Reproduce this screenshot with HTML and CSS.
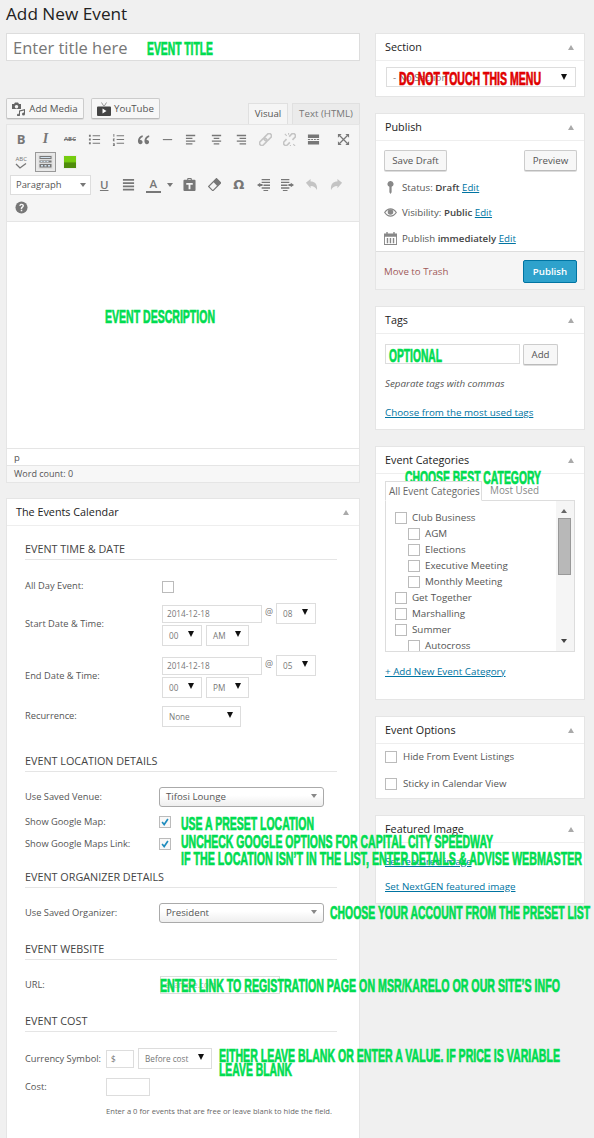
FILE: index.html
```html
<!DOCTYPE html>
<html>
    <head>
        <title>Add New Event</title>
        <link rel="stylesheet" href="styles.css">
    </head>
    <body>
        <div class="page">
            <div class="main">
                <h1>Add New Event</h1>
                <input class="title-input" type="text" placeholder="Enter title here">

                <!--MEDIA BUTTONS AND TABS-->
                <div class="media-row">
                    <div class="btn media-btn">
                        <svg class="media-ic" viewBox="0 0 14 14"><path d="M0 2h2l1-1.500h3l1 1.500h2v5h-9zM4.500 3a1.700 1.700 0 1 0 .01 0z" fill-rule="evenodd"/><path d="M7 13V8.500l6-1.500v5a1.500 1.500 0 1 1-1.500-1.500h.5V8.500l-4 1V13a1.500 1.500 0 1 1-1.500-1.500z"/></svg>
                        Add Media
                    </div>
                    <div class="btn media-btn">
                        <svg class="yt-ic" viewBox="0 0 14 14"><path d="M1 4.500h12a1 1 0 0 1 1 1V13a1 1 0 0 1-1 1H1a1 1 0 0 1-1-1V5.500a1 1 0 0 1 1-1z" fill="#444"/><path d="M5.500 6.500l4 2.500-4 2.500z" fill="#fff"/><path d="M4.500 .5l2.500 4 2.500-4" fill="none" stroke="#999" stroke-width="1"/></svg>
                        YouTube
                    </div>
                    <div class="tabs">
                        <div class="tab tab-on">Visual</div>
                        <div class="tab tab-text">Text (HTML)</div>
                    </div>
                </div>

                <!--EDITOR-->
                <div class="editor">
                    <div class="toolbar">
                        <div class="tb-row">
                            <span class="tb tb-b">B</span>
                            <span class="tb tb-i">I</span>
                            <span class="tb tb-abc">ABC</span>
                            <span class="tb"><svg class="ic" viewBox="0 0 14 14"><path d="M1 2h2v2H1zM1 6h2v2H1zM1 10h2v2H1zM5 2.500h8v1H5zM5 6.500h8v1H5zM5 10.500h8v1H5z"/></svg></span>
                            <span class="tb"><svg class="ic" viewBox="0 0 14 14"><path d="M1.500 1h1v3h-1zM1 6h2v1H2v1h1v1H1zM1 11h2v3H1v-1h1v-.2H1.500v-.6H2V12H1zM5 2.500h8v1H5zM5 6.500h8v1H5zM5 10.500h8v1H5z"/></svg></span>
                            <span class="tb"><svg class="ic" viewBox="0 0 14 14"><path d="M6 2.500C3 3.500 1 5.500 1 8.500 1 10.500 2 12 3.700 12 5 12 6 11 6 9.600 6 8.300 5 7.500 3.900 7.500c-.3 0-.5 0-.7.100C3.400 6 4.500 5 6.300 4.200zM13 2.500c-3 1-5 3-5 6 0 2 1 3.500 2.700 3.500 1.300 0 2.300-1 2.300-2.400 0-1.300-1-2.100-2.100-2.100-.3 0-.5 0-.7.100.2-1.600 1.300-2.600 3.100-3.400z"/></svg></span>
                            <span class="tb"><svg class="ic" viewBox="0 0 14 14"><path d="M2 6.500h10v1.200H2z"/></svg></span>
                            <span class="tb"><svg class="ic" viewBox="0 0 14 14"><path d="M1 2h10v1.500H1zM1 5h7v1.500H1zM1 8h10v1.500H1zM1 11h7v1.500H1z"/></svg></span>
                            <span class="tb"><svg class="ic" viewBox="0 0 14 14"><path d="M2 2h10v1.500H2zM4 5h6v1.500H4zM2 8h10v1.500H2zM4 11h6v1.500H4z"/></svg></span>
                            <span class="tb"><svg class="ic" viewBox="0 0 14 14"><path d="M3 2h10v1.500H3zM6 5h7v1.500H6zM3 8h10v1.500H3zM6 11h7v1.500H6z"/></svg></span>
                            <span class="tb off"><svg class="ic" viewBox="0 0 14 14"><g transform="rotate(-45 7 7)" fill="none" stroke="currentColor" stroke-width="1.800"><rect x="-1" y="4.500" width="9" height="5" rx="2.500"/><rect x="6" y="4.500" width="9" height="5" rx="2.500"/></g></svg></span>
                            <span class="tb off"><svg class="ic" viewBox="0 0 14 14"><g transform="rotate(-45 7 7)" fill="none" stroke="currentColor" stroke-width="1.800"><path d="M5 4.500H1.500a2.500 2.500 0 0 0 0 5H5"/><path d="M9 4.500h3.500a2.500 2.500 0 0 1 0 5H9"/></g><path d="M2 1l2 2M6 0v2M11 12l2 2M8 13v1" stroke="currentColor" stroke-width="1.200"/></svg></span>
                            <span class="tb"><svg class="ic" viewBox="0 0 14 14"><path d="M1 1.500h12v4H1zM1 8.500h12v4H1zM1 6.500h2.500v1H1zM4.500 6.500h2v1h-2zM7.500 6.500h2v1h-2zM10.500 6.500H13v1h-2.500z"/></svg></span>
                            <span class="tb tb-full"><svg class="ic" viewBox="0 0 14 14"><path d="M1 1h4L1 5zM13 1H9l4 4zM1 13h4l-4-4zM13 13H9l4-4z"/><path d="M3 3l8 8M11 3l-8 8" stroke="currentColor" stroke-width="1.300"/></svg></span>
                        </div>
                        <div class="tb-row">
                            <span class="tb tb-spell">ABC<svg viewBox="0 0 12 6"><path d="M1 1l4 4 6-4.500" fill="none" stroke="currentColor" stroke-width="1.300"/></svg></span>
                            <span class="tb tb-on"><svg class="ic-sink" viewBox="0 0 14 14"><path d="M0 0h14v14H0z" fill="#ddd"/><path d="M1 1h12v3H1zM1 5.500h12v2H1zM1 9h12v3.500H1z" fill="#777"/><path d="M2 2h10v1H2zM2 6h2v1H2zM5 6h2v1H5zM8 6h2v1H8zM2.500 10h2v1.500h-2zM6 10h2v1.500H6zM9.500 10h2v1.500h-2z" fill="#cfe0ee"/></svg></span>
                            <span class="tb"><i class="green-sq"></i></span>
                        </div>
                        <div class="tb-row">
                            <div class="para-sel">Paragraph<i class="caret"></i></div>
                            <span class="tb tb-u">U</span>
                            <span class="tb"><svg class="ic" viewBox="0 0 14 14"><path d="M1 1h12v2H1zM1 4.500h12v2H1zM1 8h12v2H1zM1 11.500h12v2H1z"/></svg></span>
                            <span class="tb tb-a"><span class="a-letter">A</span><i class="caret"></i></span>
                            <span class="tb"><svg class="ic" viewBox="0 0 14 14"><path d="M1.500 2h3V1a1 1 0 0 1 1-1h3a1 1 0 0 1 1 1v1h3a1 1 0 0 1 1 1v10a1 1 0 0 1-1 1h-11a1 1 0 0 1-1-1V3a1 1 0 0 1 1-1z"/><path d="M3.500 5.500h7v1.800H8V12H6V7.300H3.500zM5.700 1v1h2.600V1z" fill="#f5f5f5"/></svg></span>
                            <span class="tb"><svg class="ic" viewBox="0 0 14 14"><g transform="rotate(-45 7 7)"><path d="M1 4h12v6.500H1z" fill="none" stroke="currentColor" stroke-width="1.300"/><path d="M8 4h5v6.500H8z"/></g></svg></span>
                            <span class="tb tb-om">Ω</span>
                            <span class="tb"><svg class="ic" viewBox="0 0 14 14"><path d="M5 1h9v1.500H5zM5 4h9v1.500H5zM7 7h7v1.500H7zM5 10h9v1.500H5zM7 13h5v1H7zM0 7.500l3.500-2.500V6.500h2.500v2H3.500V10z"/></svg></span>
                            <span class="tb"><svg class="ic" viewBox="0 0 14 14"><path d="M0 1h9v1.500H0zM0 4h9v1.500H0zM0 7h7v1.500H0zM0 10h9v1.500H0zM2 13h5v1H2zM14 7.500L10.500 5v1.500H8v2h2.500V10z"/></svg></span>
                            <span class="tb off"><svg class="ic" viewBox="0 0 14 14"><path d="M1 5l5-4v2.700c4.500 0 7 2.800 7 7.300 0 .8 0 1.300-.2 2-1-2.700-3-4.500-6.800-4.500V11z"/></svg></span>
                            <span class="tb off"><svg class="ic" viewBox="0 0 14 14"><path d="M13 5L8 1v2.700C3.500 3.700 1 6.500 1 11c0 .8 0 1.300.2 2 1-2.700 3-4.500 6.800-4.500V11z"/></svg></span>
                        </div>
                        <div class="tb-row">
                            <span class="tb"><svg class="ic" viewBox="0 0 14 14"><circle cx="7" cy="7" r="6.500"/><path d="M4.500 5.200C4.700 3.700 5.800 3 7.100 3c1.500 0 2.600.9 2.600 2.200 0 1-.6 1.500-1.300 2-.5.400-.7.600-.7 1.300H6.200c0-1.200.3-1.700 1-2.200.6-.4.900-.7.900-1.100 0-.5-.4-.8-1-.8s-1 .3-1.100 1zM6.200 9.500h1.600v1.500H6.200z" fill="#f5f5f5"/></svg></span>
                        </div>
                    </div>
                    <div class="editor-body"></div>
                    <div class="path-bar">p</div>
                    <div class="word-count">Word count: 0</div>
                </div>

                <!--EVENTS CALENDAR-->
                <div class="box cal-box">
                    <div class="box-head">The Events Calendar<i class="fold"></i></div>
                    <div class="cal-body">
                        <h4 class="sec sec-first">EVENT TIME &amp; DATE</h4>

                        <div class="row row-allday">
                            <span class="lab lab-time">All Day Event:</span>
                            <i class="check"></i>
                        </div>
                        <div class="row row-when">
                            <span class="lab lab-time">Start Date &amp; Time:</span>
                            <div class="when">
                                <div class="when-line">
                                    <div class="field date">2014-12-18</div>
                                    <span class="at">@</span>
                                    <div class="sel sel-hr">08</div>
                                </div>
                                <div class="when-line">
                                    <div class="sel sel-hr">00</div>
                                    <div class="sel sel-ap">AM</div>
                                </div>
                            </div>
                        </div>
                        <div class="row row-when">
                            <span class="lab lab-time">End Date &amp; Time:</span>
                            <div class="when">
                                <div class="when-line">
                                    <div class="field date">2014-12-18</div>
                                    <span class="at">@</span>
                                    <div class="sel sel-hr">05</div>
                                </div>
                                <div class="when-line">
                                    <div class="sel sel-hr">00</div>
                                    <div class="sel sel-ap">PM</div>
                                </div>
                            </div>
                        </div>
                        <div class="row row-recur">
                            <span class="lab lab-time">Recurrence:</span>
                            <div class="sel sel-rec">None</div>
                        </div>

                        <h4 class="sec sec-loc">EVENT LOCATION DETAILS</h4>
                        <div class="row row-venue">
                            <span class="lab lab-venue">Use Saved Venue:</span>
                            <div class="chosen">Tifosi Lounge<i class="caret"></i></div>
                        </div>
                        <div class="row row-map">
                            <span class="lab lab-venue">Show Google Map:</span>
                            <i class="check checked"><svg viewBox="0 0 12 12"><path d="M2.500 6l2.500 3 4.500-6.500" fill="none" stroke="#1e8cbe" stroke-width="2"/></svg></i>
                        </div>
                        <div class="row row-link">
                            <span class="lab lab-venue">Show Google Maps Link:</span>
                            <i class="check checked"><svg viewBox="0 0 12 12"><path d="M2.500 6l2.500 3 4.500-6.500" fill="none" stroke="#1e8cbe" stroke-width="2"/></svg></i>
                        </div>

                        <h4 class="sec sec-org">EVENT ORGANIZER DETAILS</h4>
                        <div class="row row-venue">
                            <span class="lab lab-venue">Use Saved Organizer:</span>
                            <div class="chosen">President<i class="caret"></i></div>
                        </div>

                        <h4 class="sec sec-web">EVENT WEBSITE</h4>
                        <div class="row row-url">
                            <span class="lab lab-url">URL:</span>
                            <div class="field url">example.com</div>
                        </div>

                        <h4 class="sec sec-cost">EVENT COST</h4>
                        <div class="row row-cur">
                            <span class="lab lab-cost">Currency Symbol:</span>
                            <div class="field cur">$</div>
                            <div class="sel sel-before">Before cost</div>
                        </div>
                        <div class="row row-cost">
                            <span class="lab lab-cost">Cost:</span>
                            <div class="field cost"></div>
                        </div>
                        <p class="cost-note">Enter a 0 for events that are free or leave blank to hide the field.</p>
                    </div>
                </div>
            </div>

            <div class="side">
                <!--SECTION-->
                <div class="box">
                    <div class="box-head">Section<i class="fold"></i></div>
                    <div class="sel sel-section">- No Section -</div>
                </div>

                <!--PUBLISH-->
                <div class="box">
                    <div class="box-head">Publish<i class="fold"></i></div>
                    <div class="pub-btns">
                        <div class="btn">Save Draft</div>
                        <div class="btn">Preview</div>
                    </div>
                    <div class="pub-line">
                        <svg class="pub-ic pin" viewBox="0 0 8 14"><path d="M4 0a3.200 3.200 0 0 1 1.200 6.200V12L4 14l-1.200-2V6.200A3.200 3.200 0 0 1 4 0z"/></svg>
                        <span>Status: <b>Draft</b> <a>Edit</a></span>
                    </div>
                    <div class="pub-line">
                        <svg class="pub-ic" viewBox="0 0 14 10"><path d="M0 5c2-3 4.500-4.500 7-4.500S12 2 14 5c-2 3-4.500 4.500-7 4.500S2 8 0 5zm1.500 0c1.500 2 3.500 3.300 5.500 3.300S11 7 12.500 5C11 3 9 1.700 7 1.700S3 3 1.500 5z"/><circle cx="7" cy="4.500" r="3"/></svg>
                        <span>Visibility: <b>Public</b> <a>Edit</a></span>
                    </div>
                    <div class="pub-line">
                        <svg class="pub-ic" viewBox="0 0 14 14"><path d="M0 1.500h2.500V0h1.500v1.500h6V0h1.500v1.500H14V14H0zM1 5v8h12V5z" fill-rule="evenodd"/><path d="M3 6.500h1.500V12H3zM6.200 6.500h1.500V12H6.200zM9.500 6.500H11V12H9.500z"/></svg>
                        <span>Publish <b>immediately</b> <a>Edit</a></span>
                    </div>
                    <div class="pub-foot">
                        <span class="trash">Move to Trash</span>
                        <div class="btn-primary">Publish</div>
                    </div>
                </div>

                <!--TAGS-->
                <div class="box">
                    <div class="box-head">Tags<i class="fold"></i></div>
                    <div class="tag-row">
                        <div class="field tag-input"></div>
                        <div class="btn btn-add">Add</div>
                    </div>
                    <p class="tag-hint">Separate tags with commas</p>
                    <a class="box-link tag-link">Choose from the most used tags</a>
                </div>

                <!--CATEGORIES-->
                <div class="box">
                    <div class="box-head">Event Categories<i class="fold"></i></div>
                    <div class="cat-tabs">
                        <span class="cat-tab cat-tab-on">All Event Categories</span>
                        <span class="cat-tab">Most Used</span>
                    </div>
                    <div class="cat-list">
                        <div class="cat-items">
                            <div class="cat"><i class="check"></i>Club Business</div>
                            <div class="cat cat-sub"><i class="check"></i>AGM</div>
                            <div class="cat cat-sub"><i class="check"></i>Elections</div>
                            <div class="cat cat-sub"><i class="check"></i>Executive Meeting</div>
                            <div class="cat cat-sub"><i class="check"></i>Monthly Meeting</div>
                            <div class="cat"><i class="check"></i>Get Together</div>
                            <div class="cat"><i class="check"></i>Marshalling</div>
                            <div class="cat"><i class="check"></i>Summer</div>
                            <div class="cat cat-sub"><i class="check"></i>Autocross</div>
                        </div>
                        <div class="scrollbar">
                            <i class="arrow-up"></i>
                            <i class="thumb"></i>
                            <i class="arrow-down"></i>
                        </div>
                    </div>
                    <a class="box-link cat-link">+ Add New Event Category</a>
                </div>

                <!--OPTIONS-->
                <div class="box">
                    <div class="box-head">Event Options<i class="fold"></i></div>
                    <div class="opt opt-first"><i class="check"></i>Hide From Event Listings</div>
                    <div class="opt"><i class="check"></i>Sticky in Calendar View</div>
                </div>

                <!--FEATURED IMAGE-->
                <div class="box">
                    <div class="box-head">Featured Image<i class="fold"></i></div>
                    <a class="box-link feat-link">Set featured image</a>
                    <a class="box-link feat-link feat-link2">Set NextGEN featured image</a>
                </div>
            </div>

            <!--NOTES DRAWN ON TOP OF THE SCREENSHOT-->
            <svg class="notes" viewBox="0 0 594 1138">
                <text class="note" x="147" y="55" textLength="66" lengthAdjust="spacingAndGlyphs">EVENT TITLE</text>
                <text class="warn" x="399" y="85" textLength="142" lengthAdjust="spacingAndGlyphs">DO NOT TOUCH THIS MENU</text>
                <text class="note" x="389" y="362" textLength="53" lengthAdjust="spacingAndGlyphs">OPTIONAL</text>
                <text class="note" x="105" y="323" textLength="110" lengthAdjust="spacingAndGlyphs">EVENT DESCRIPTION</text>
                <text class="note" x="405" y="484" textLength="136" lengthAdjust="spacingAndGlyphs">CHOOSE BEST CATEGORY</text>
                <text class="note" x="181" y="830" textLength="133" lengthAdjust="spacingAndGlyphs">USE A PRESET LOCATION</text>
                <text class="note" x="181" y="848" textLength="312" lengthAdjust="spacingAndGlyphs">UNCHECK GOOGLE OPTIONS FOR CAPITAL CITY SPEEDWAY</text>
                <text class="note" x="181" y="865" textLength="401" lengthAdjust="spacingAndGlyphs">IF THE LOCATION ISN’T IN THE LIST, ENTER DETAILS &amp; ADVISE WEBMASTER</text>
                <text class="note" x="330" y="919" textLength="260" lengthAdjust="spacingAndGlyphs">CHOOSE YOUR ACCOUNT FROM THE PRESET LIST</text>
                <text class="note" x="160" y="992" textLength="400" lengthAdjust="spacingAndGlyphs">ENTER LINK TO REGISTRATION PAGE ON MSR/KARELO OR OUR SITE’S INFO</text>
                <text class="note" x="219" y="1062" textLength="341" lengthAdjust="spacingAndGlyphs">EITHER LEAVE BLANK OR ENTER A VALUE. IF PRICE IS VARIABLE</text>
                <text class="note" x="219" y="1076" textLength="73" lengthAdjust="spacingAndGlyphs">LEAVE BLANK</text>
            </svg>
        </div>
    </body>
</html>
```

FILE: styles.css
```css
html{
    overflow: hidden;
}

body{
    margin: 0;
    height: 1138px;
    overflow: hidden;
    background-color: #f0f0f0;
    color: #555;
    font-family: "Open Sans", sans-serif;
    font-size: 9.700px;
}

a{
    color: #0074a2;
    text-decoration: underline;
}

.page{
    position: relative;
    display: flex;
    gap: 15px;
    width: 594px;
    height: 1138px;
    padding-left: 6px;
    box-sizing: border-box;
    overflow: hidden;
}

.main{
    width: 354px;
    flex: none;
}

.side{
    width: 210px;
    flex: none;
    display: flex;
    flex-direction: column;
    gap: 16px;
    padding-top: 33px;
}

h1{
    margin: 0;
    height: 33px;
    font-size: 17.200px;
    font-weight: 400;
    line-height: 27px;
    color: #222;
}

.title-input{
    display: block;
    width: 100%;
    height: 28px;
    box-sizing: border-box;
    border: 1px solid #ddd;
    padding: 0 6px;
    font-family: "Open Sans", sans-serif;
    font-size: 16.500px;
    outline: none;
}

.title-input::placeholder{
    color: #777;
}

/* buttons */
.btn{
    display: flex;
    align-items: center;
    justify-content: center;
    height: 21px;
    box-sizing: border-box;
    border: 1px solid #ccc;
    border-bottom-color: #bbb;
    border-radius: 2px;
    background-color: #f7f7f7;
    box-shadow: 0 1px 0 #ddd;
    color: #555;
    font-size: 9.700px;
    white-space: nowrap;
}

.media-row{
    display: flex;
    align-items: flex-start;
    height: 26px;
    margin-top: 37px;
}

.media-btn{
    gap: 3px;
    padding: 0 5px;
    margin-right: 7px;
}

.media-btn:nth-child(1){
    width: 78px;
}

.media-btn:nth-child(2){
    width: 69px;
    margin-right: 0;
}

.media-ic{
    width: 14px;
    height: 14px;
    flex: none;
    fill: #666;
}

.yt-ic{
    width: 14px;
    height: 14px;
    flex: none;
}

.tabs{
    display: flex;
    gap: 4px;
    margin-left: auto;
    align-self: flex-end;
}

.tab{
    width: 40px;
    height: 21px;
    box-sizing: border-box;
    border: 1px solid #e0e0e0;
    border-bottom: none;
    background-color: #ebebeb;
    color: #777;
    font-size: 9.700px;
    line-height: 20px;
    text-align: center;
    white-space: nowrap;
}

.tab-text{
    width: 68px;
}

.tab-on{
    background-color: #f5f5f5;
    color: #555;
}

/* editor */
.editor{
    border: 1px solid #e5e5e5;
    background-color: #fff;
}

.toolbar{
    height: 97px;
    padding: 3px 0 0 2px;
    box-sizing: border-box;
    border-bottom: 1px solid #e5e5e5;
    background-color: #f5f5f5;
    overflow: hidden;
}

.tb-row{
    display: flex;
    align-items: center;
    height: 22.700px;
}

.tb{
    display: flex;
    align-items: center;
    justify-content: center;
    width: 24.400px;
    height: 20px;
    flex: none;
    color: #777;
    font-weight: 700;
}

.off{
    color: #c4c4c4;
}

.ic{
    width: 13px;
    height: 13px;
    fill: currentColor;
}

.off .ic{
    stroke: none;
}

.tb-b{
    font-size: 13px;
}

.tb-i{
    font-family: "Liberation Serif", serif;
    font-size: 14px;
    font-style: italic;
}

.tb-abc{
    font-size: 6px;
    text-decoration: line-through;
}

.tb-full{
    margin-left: 5px;
}

.tb-spell{
    flex-direction: column;
    font-size: 6px;
    line-height: 7px;
    font-weight: 400;
}

.tb-spell svg{
    width: 12px;
    height: 6px;
}

.tb-on{
    width: 21px;
    height: 20px;
    margin: 0 1.700px;
    box-sizing: border-box;
    border: 1px solid #999;
    background-color: #e8e8e8;
}

.ic-sink{
    width: 15px;
    height: 14px;
}

.green-sq{
    display: block;
    width: 12px;
    height: 12px;
    border: 1px solid #eee;
    background-image: linear-gradient(#76cc10 0, #76cc10 45%, #4f8c0c 60%, #4f8c0c 100%);
}

.para-sel{
    position: relative;
    width: 81px;
    height: 20px;
    margin-left: 1px;
    margin-right: 1px;
    box-sizing: border-box;
    padding-left: 5px;
    flex: none;
    border: 1px solid #ddd;
    background-color: #fff;
    color: #555;
    font-size: 9.400px;
    line-height: 18px;
}

.caret{
    display: block;
    width: 0;
    height: 0;
    border-left: 3px solid transparent;
    border-right: 3px solid transparent;
    border-top: 4px solid #777;
}

.para-sel .caret{
    position: absolute;
    right: 4px;
    top: 7px;
}

.tb-u{
    font-size: 11.500px;
    font-weight: 600;
    text-decoration: underline;
}

.tb-a{
    width: 37px;
    justify-content: flex-start;
    gap: 6px;
    padding-left: 5px;
    box-sizing: border-box;
    font-size: 11.500px;
    font-weight: 600;
}

.a-letter{
    width: 15px;
    text-align: center;
    line-height: 14px;
    border-bottom: 2px solid #777;
}

.tb-om{
    font-family: "DejaVu Sans", sans-serif;
    font-size: 13px;
}

.editor-body{
    height: 226px;
}

.path-bar{
    height: 17px;
    padding-left: 7px;
    box-sizing: border-box;
    border-top: 1px solid #e5e5e5;
    font-size: 9.500px;
    line-height: 17px;
}

.word-count{
    height: 17px;
    padding-left: 7px;
    box-sizing: border-box;
    border-top: 1px solid #e5e5e5;
    background-color: #f7f7f7;
    font-size: 9px;
    line-height: 16px;
}

/* boxes */
.box{
    border: 1px solid #e5e5e5;
    background-color: #fff;
}

.box-head{
    position: relative;
    height: 27px;
    box-sizing: border-box;
    padding-left: 9px;
    border-bottom: 1px solid #eee;
    color: #222;
    font-size: 10.800px;
    line-height: 26px;
}

.fold{
    position: absolute;
    right: 10px;
    top: 11px;
    width: 0;
    height: 0;
    border-left: 3.500px solid transparent;
    border-right: 3.500px solid transparent;
    border-bottom: 5px solid #aaa;
}

.cal-box{
    margin-top: 15px;
    height: 700px;
}

.cal-body{
    padding: 13px 22px 0 18px;
}

.sec{
    height: 21px;
    margin: 0;
    box-sizing: border-box;
    border-bottom: 1px solid #e5e5e5;
    color: #444;
    font-size: 10.800px;
    font-weight: 500;
    line-height: 20px;
}

.sec-loc{
    margin-top: 24px;
}

.sec-org{
    margin-top: 17px;
}

.sec-web{
    margin-top: 16px;
}

.sec-cost{
    margin-top: 17px;
}

.row{
    display: flex;
    align-items: center;
}

.lab{
    flex: none;
    font-size: 9.300px;
    line-height: 12px;
    white-space: nowrap;
}

.lab-time{
    width: 137px;
    position: relative;
    top: -1px;
}

.lab-venue{
    width: 134px;
}

.lab-url{
    width: 135px;
}

.lab-cost{
    width: 81px;
}

.row-allday{
    height: 20px;
    margin-top: 17px;
}

.row-when{
    height: 43px;
    margin-top: 6px;
}

.row-when + .row-when{
    margin-top: 9px;
}

.row-recur{
    height: 21px;
    margin-top: 8px;
}

.row-venue{
    height: 20px;
    margin-top: 15px;
}

.row-map{
    height: 12px;
    margin-top: 9px;
}

.row-link{
    height: 12px;
    margin-top: 10px;
}

.row-url{
    height: 18px;
    margin-top: 16px;
}

.row-cur{
    height: 21px;
    margin-top: 16px;
}

.row-cost{
    height: 18px;
    margin-top: 9px;
}

.check{
    display: block;
    flex: none;
    width: 12px;
    height: 12px;
    box-sizing: border-box;
    border: 1px solid #bbb;
    background-color: #fff;
}

.checked{
    background-color: #f8f8f8;
}

.checked svg{
    display: block;
    width: 10px;
    height: 10px;
}

.when{
    display: flex;
    flex-direction: column;
    gap: 1px;
}

.when-line{
    display: flex;
    align-items: center;
    gap: 4px;
    height: 21px;
}

.field{
    height: 18px;
    box-sizing: border-box;
    border: 1px solid #ddd;
    background-color: #fff;
    padding-left: 4px;
    color: #777;
    font-size: 8.200px;
    line-height: 16px;
    white-space: nowrap;
}

.date{
    width: 100px;
}

.at{
    width: 8px;
    margin: 0 -1px;
    position: relative;
    top: -2px;
    color: #777;
    font-size: 9px;
}

.sel{
    position: relative;
    height: 21px;
    box-sizing: border-box;
    border: 1px solid #ddd;
    background-color: #fff;
    padding-left: 6px;
    color: #777;
    font-size: 8.200px;
    line-height: 20px;
    white-space: nowrap;
}

.sel::after{
    content: "";
    position: absolute;
    right: 7px;
    top: 5px;
    width: 0;
    height: 0;
    border-left: 3.500px solid transparent;
    border-right: 3.500px solid transparent;
    border-top: 6px solid #111;
}

.sel-hr{
    width: 40px;
}

.sel-ap{
    width: 43px;
}

.sel-rec{
    width: 79px;
}

.chosen{
    position: relative;
    width: 165px;
    height: 20px;
    box-sizing: border-box;
    border: 1px solid #aaa;
    border-radius: 3px;
    background-image: linear-gradient(#fff 40%, #eee 100%);
    padding-left: 6px;
    color: #555;
    font-size: 9.700px;
    line-height: 18px;
}

.chosen .caret{
    position: absolute;
    right: 6px;
    top: 6px;
    border-top-color: #888;
}

.url{
    width: 120px;
    color: #bbb;
}

.cur{
    width: 28px;
    margin-right: 4px;
}

.sel-before{
    width: 74px;
}

.cost{
    width: 44px;
}

.cost-note{
    margin: 9px 0 0 81px;
    color: #666;
    font-size: 7.600px;
    line-height: 12px;
    white-space: nowrap;
}

/* side boxes */
.sel-section{
    width: 190px;
    margin: 6px 0 9px 10px;
    height: 20px;
    line-height: 19px;
    font-size: 9.700px;
}

.sel-section::after{
    right: 8px;
    top: 6px;
}

.pub-btns{
    display: flex;
    justify-content: space-between;
    padding: 9px 7px 4px 8px;
}

.pub-btns .btn:nth-child(1){
    width: 63px;
}

.pub-btns .btn:nth-child(2){
    width: 53px;
}

.pub-line{
    display: flex;
    align-items: center;
    height: 25.300px;
    padding-left: 8px;
    font-size: 9.700px;
}

.pub-line b{
    font-weight: 600;
    color: #444;
}

.pub-ic{
    width: 13px;
    height: 13px;
    margin-right: 5px;
    flex: none;
    fill: #888;
}

.pub-foot{
    display: flex;
    align-items: center;
    justify-content: space-between;
    height: 38px;
    box-sizing: border-box;
    padding: 2px 7px 0 8px;
    border-top: 1px solid #ddd;
    background-color: #f5f5f5;
}

.trash{
    color: #a05a5a;
    font-size: 9.700px;
}

.btn-primary{
    display: flex;
    align-items: center;
    justify-content: center;
    width: 54px;
    height: 23px;
    box-sizing: border-box;
    border: 1px solid #0074a2;
    border-radius: 2px;
    background-color: #2ea2cc;
    color: #fff;
    font-size: 9.700px;
    font-weight: 600;
}

.tag-row{
    display: flex;
    gap: 3px;
    padding: 10px 0 0 9px;
}

.tag-input{
    width: 135px;
    height: 20px;
}

.btn-add{
    width: 35px;
    height: 21px;
}

.tag-hint{
    margin: 12px 0 0 9px;
    font-size: 9.800px;
    font-style: italic;
    line-height: 14px;
}

.box-link{
    display: block;
    margin-left: 9px;
    font-size: 9.800px;
    line-height: 14px;
}

.tag-link{
    margin-top: 15px;
    padding-bottom: 9px;
}

.cat-tabs{
    display: flex;
    height: 20px;
    margin: 7px 0 -1px 9px;
    position: relative;
    z-index: 1;
}

.cat-tab{
    box-sizing: border-box;
    height: 20px;
    padding: 0 8px 0 3px;
    color: #888;
    font-size: 9.900px;
    line-height: 18px;
    white-space: nowrap;
}

.cat-tab-on{
    width: 97px;
    border: 1px solid #ddd;
    border-bottom-color: #fff;
    background-color: #fff;
    color: #666;
    padding: 0 0 0 3px;
}

.cat-tab:last-child{
    padding-left: 8px;
}

.cat-list{
    display: flex;
    width: 190px;
    height: 152px;
    margin-left: 9px;
    box-sizing: border-box;
    border: 1px solid #ddd;
    overflow: hidden;
}

.cat-items{
    flex: 1;
    padding: 9px 0 0 9px;
}

.cat{
    display: flex;
    align-items: center;
    gap: 5px;
    height: 16px;
    font-size: 9.800px;
    white-space: nowrap;
}

.cat-sub{
    margin-left: 13px;
}

.scrollbar{
    position: relative;
    width: 18px;
    flex: none;
    background-color: #f5f5f5;
}

.thumb{
    position: absolute;
    left: 2px;
    top: 17px;
    width: 13px;
    height: 57px;
    box-sizing: border-box;
    border: 1px solid #999;
    background-color: #b8b8b8;
}

.arrow-up{
    position: absolute;
    left: 5px;
    top: 8px;
    border-left: 3.500px solid transparent;
    border-right: 3.500px solid transparent;
    border-bottom: 4px solid #666;
}

.arrow-down{
    position: absolute;
    left: 5px;
    bottom: 8px;
    border-left: 3.500px solid transparent;
    border-right: 3.500px solid transparent;
    border-top: 4px solid #444;
}

.cat-link{
    margin-top: 13px;
    padding-bottom: 20px;
}

.opt{
    display: flex;
    align-items: center;
    gap: 6px;
    height: 12px;
    margin: 15px 0 0 9px;
    font-size: 9.700px;
}

.opt-first{
    margin-top: 7px;
}

.opt:last-child{
    margin-bottom: 8px;
}

.feat-link{
    margin-top: 12px;
}

.feat-link2{
    margin-top: 11px;
    padding-bottom: 9px;
}

/* notes */
.notes{
    position: absolute;
    left: 0;
    top: 0;
    width: 594px;
    height: 1138px;
    pointer-events: none;
}

.note,
.warn{
    font-family: "Liberation Sans", sans-serif;
    font-size: 18px;
    font-weight: 700;
    stroke-width: 0.7px;
}

.note{
    fill: #00dc50;
    stroke: #00dc50;
}

.warn{
    fill: #e00000;
    stroke: #e00000;
}
```
